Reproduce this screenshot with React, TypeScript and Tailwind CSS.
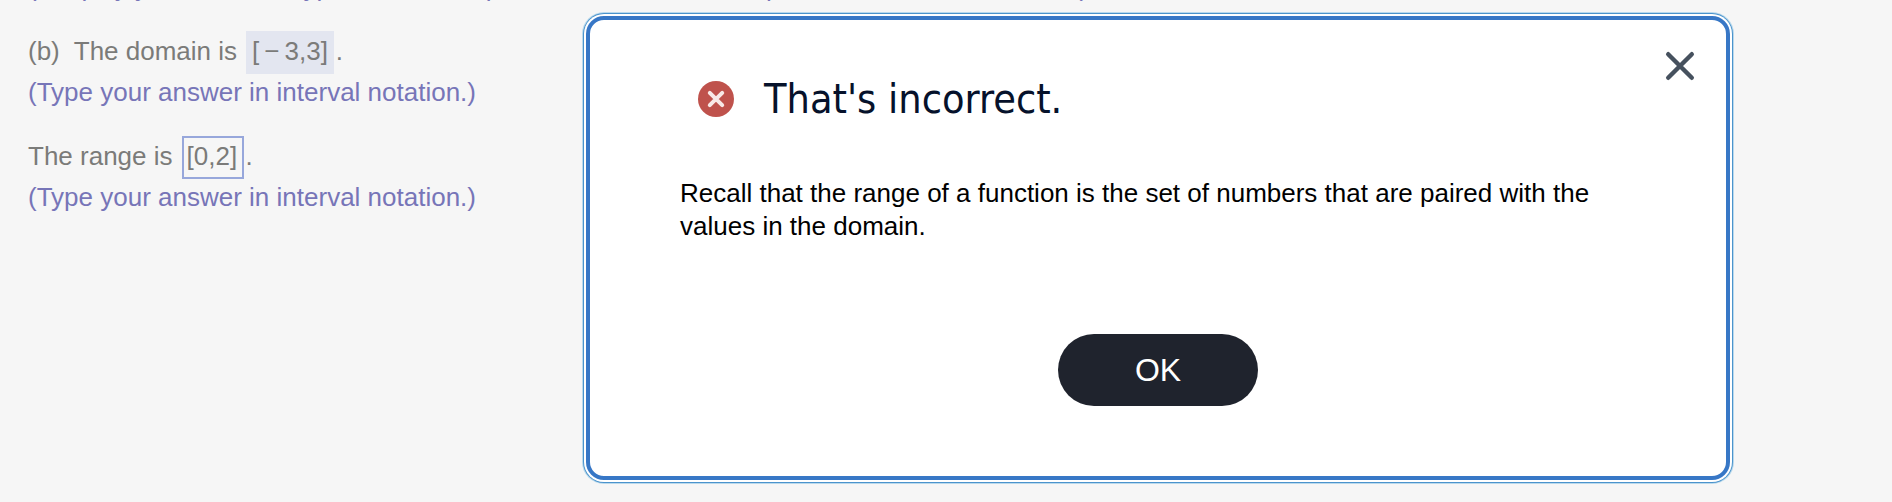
import type { ReactNode } from "react";

/**
 * Purple instruction line under (or above) an answer row
 */
function Hint({ children }: { children: ReactNode }) {
    return <p className="leading-9 text-[#7775b8]">{children}</p>;
}

function Question() {
    return (
        <div className="-mt-[31px] flex flex-col gap-[26px] pl-7 text-[26px] text-[#7b7b79] whitespace-nowrap">
            <Hint>
                (Simplify your answer. Type an ordered pair. Use a comma to separate answers as needed.)
            </Hint>

            {/* Domain */}
            <div>
                <div className="flex h-[43px] leading-10">
                    <span className="whitespace-pre">(b)  The domain is</span>
                    <span className="ml-[9px] mr-[2px] flex gap-[5px] bg-[#e3e6f0] px-[6px]">
                        <span>[</span>
                        <span>−</span>
                        <span>3,3]</span>
                    </span>
                    <span>.</span>
                </div>
                <Hint>(Type your answer in interval notation.)</Hint>
            </div>

            {/* Range */}
            <div>
                <div className="flex h-[43px] leading-10">
                    <label htmlFor="range">The range is</label>
                    <input
                        id="range"
                        type="text"
                        defaultValue="[0,2]"
                        className="ml-[9px] mr-[2px] w-[62px] border-2 border-[#97a7db] bg-transparent px-[3px] pb-[3px] outline-none"
                    />
                    <span>.</span>
                </div>
                <Hint>(Type your answer in interval notation.)</Hint>
            </div>
        </div>
    );
}

function FeedbackDialog() {
    return (
        <div
            role="dialog"
            aria-labelledby="feedback-title"
            className="absolute top-4 right-[162px] left-[586px] flex flex-col rounded-[18px] border-4 border-[#3777c6] bg-white pt-[51px] pb-[70px] shadow-[0_0_0_2px_#ffffff,0_0_0_3px_#4b93cc,0_0_0_4px_#b9d9ec]"
        >
            <button
                type="button"
                aria-label="Close"
                className="absolute top-[30px] right-[30px] cursor-pointer"
            >
                <svg width="32" height="32" viewBox="0 0 32 32" fill="none" stroke="#46515e" strokeWidth="4.4" strokeLinecap="round">
                    <path d="M4.2 4.2 27.8 27.8M27.8 4.2 4.2 27.8" />
                </svg>
            </button>

            <div className="flex items-center gap-[30px] pl-[108px]">
                <svg width="36" height="36" viewBox="0 0 36 36" fill="none">
                    <circle cx="18" cy="18" r="18" fill="#bf524c" />
                    <path d="M11.8 11.8 24.2 24.2M24.2 11.8 11.8 24.2" stroke="#f8e9e7" strokeWidth="4" strokeLinecap="round" />
                </svg>
                <h1 id="feedback-title" className="font-['DejaVu_Sans_Condensed','DejaVu_Sans',sans-serif] text-[41px] leading-[56px] text-[#06122b]">
                    That's incorrect.
                </h1>
            </div>

            <p className="mt-[50px] mr-[110px] ml-[90px] text-[26px] leading-[33px] text-black">
                Recall that the range of a function is the set of numbers that are paired with the values in the domain.
            </p>

            <button
                type="button"
                className="mt-[91px] h-[72px] w-[200px] cursor-pointer self-center rounded-full bg-[#1f232d] text-[32px] text-white"
            >
                OK
            </button>
        </div>
    );
}

export default function App() {
    return (
        <div className="relative flow-root min-h-screen overflow-hidden bg-[#f6f6f6] font-['Liberation_Sans',Arial,sans-serif]">
            <Question />
            <FeedbackDialog />
        </div>
    );
}
